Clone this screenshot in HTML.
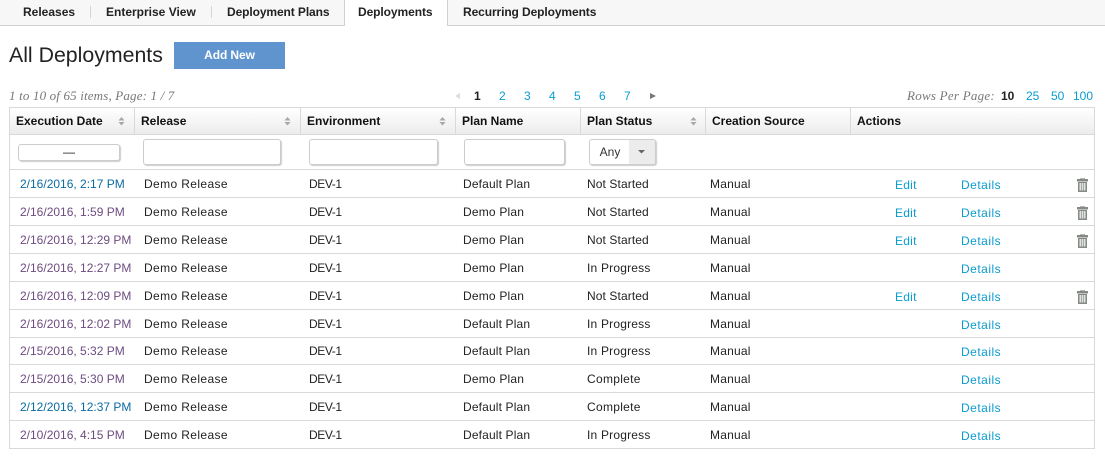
<!DOCTYPE html>
<html><head><meta charset="utf-8">
<style>
html,body{margin:0;padding:0;background:#fff;}
body{width:1105px;height:463px;position:relative;overflow:hidden;font-family:"Liberation Sans",Arial,sans-serif;font-size:12px;color:#222;}
.a{position:absolute;white-space:nowrap;line-height:14px;}
.b{font-weight:bold;}
.tab{top:5px;font-weight:bold;color:#222;}
.l{position:absolute;background:#d9d9d9;}
.r{letter-spacing:.38px;left:144px;}
.e{letter-spacing:-.4px;left:309px;}
.p{letter-spacing:.15px;left:463px;}
.q{letter-spacing:.2px;left:463px;}
.n{letter-spacing:.1px;left:587px;}
.i{letter-spacing:.2px;left:587px;}
.o{letter-spacing:.3px;left:587px;}
.m{letter-spacing:.2px;left:710px;}
.d{left:20px;color:#6d4c80;}
.d.v{color:#0b6ba0;}
.k{letter-spacing:.5px;color:#0a9bd0;left:961px;}
.t{letter-spacing:.25px;color:#0a9bd0;left:895px;}
.h{position:absolute;top:108px;height:26px;background:linear-gradient(#fff,#ececec);}
.th{top:114px;font-weight:bold;color:#111;}
.inp{position:absolute;box-sizing:border-box;border:1px solid #ccc;border-radius:3px;background:#fff;box-shadow:1px 1px 1px #ccc;}
.s{position:absolute;width:7px;height:10px;}
.pg{top:89px;letter-spacing:0;color:#0a9bd0;}
.x{position:absolute;left:1077px;}
</style></head><body>
<div style="position:absolute;left:0;top:0;width:1105px;height:25px;background:#f7f7f7;border-bottom:1px solid #d0d0d0;"></div>
<div style="position:absolute;left:344px;top:0;width:102px;height:26px;background:#fff;border-left:1px solid #d0d0d0;border-right:1px solid #d0d0d0;"></div>
<div class="a tab" style="left:23px;">Releases</div>
<div style="position:absolute;left:90px;top:6px;width:1px;height:12px;background:#d5d5d5;"></div>
<div class="a tab" style="left:106px;">Enterprise View</div>
<div style="position:absolute;left:211px;top:6px;width:1px;height:12px;background:#d5d5d5;"></div>
<div class="a tab" style="left:227px;letter-spacing:-.1px;">Deployment Plans</div>
<div class="a tab" style="left:358px;letter-spacing:-.08px;">Deployments</div>
<div class="a tab" style="left:463px;letter-spacing:-.1px;">Recurring Deployments</div>

<div class="a" style="left:9px;top:42px;font-size:21.3px;line-height:26px;color:#222;">All Deployments</div>
<div class="a b" style="left:174px;top:42px;width:111px;height:27px;line-height:27px;background:#5f94cf;color:#fff;text-align:center;letter-spacing:-.1px;">Add New</div>

<div class="a" style="left:9px;top:89px;font-family:'Liberation Serif',serif;font-style:italic;font-size:13px;color:#777;letter-spacing:.16px;">1 to 10 of 65 items, Page: 1 / 7</div>
<svg style="position:absolute;left:454px;top:92px" width="8" height="8"><path d="M6 1V7L1 4Z" fill="#ddd"/></svg>
<div class="a b pg" style="left:474px;color:#222;">1</div>
<div class="a pg" style="left:499px;">2</div>
<div class="a pg" style="left:524px;">3</div>
<div class="a pg" style="left:549px;">4</div>
<div class="a pg" style="left:574px;">5</div>
<div class="a pg" style="left:599px;">6</div>
<div class="a pg" style="left:624px;">7</div>
<svg style="position:absolute;left:649px;top:92px" width="8" height="8"><path d="M1 1V7L7 4Z" fill="#777"/></svg>
<div class="a" style="left:907px;top:89px;font-family:'Liberation Serif',serif;font-style:italic;font-size:13px;color:#777;letter-spacing:.25px;">Rows Per Page:</div>
<div class="a b pg" style="left:1001px;color:#222;">10</div>
<div class="a pg" style="left:1026px;">25</div>
<div class="a pg" style="left:1051px;">50</div>
<div class="a pg" style="left:1073px;">100</div>

<!-- table frame -->
<div class="l" style="left:9px;top:107px;width:1086px;height:1px;"></div>
<div class="l" style="left:9px;top:107px;width:1px;height:342px;"></div>
<div class="l" style="left:1094px;top:107px;width:1px;height:342px;"></div>
<div class="h" style="left:10px;width:1084px;"></div>
<div class="l" style="left:9px;top:134px;width:1086px;height:1px;"></div>
<div class="l" style="left:134px;top:108px;width:1px;height:26px;"></div>
<div class="l" style="left:300px;top:108px;width:1px;height:26px;"></div>
<div class="l" style="left:455px;top:108px;width:1px;height:26px;"></div>
<div class="l" style="left:580px;top:108px;width:1px;height:26px;"></div>
<div class="l" style="left:705px;top:108px;width:1px;height:26px;"></div>
<div class="l" style="left:850px;top:108px;width:1px;height:26px;"></div>

<div class="a th" style="left:16px;">Execution Date</div>
<div class="a th" style="left:141px;">Release</div>
<div class="a th" style="left:307px;">Environment</div>
<div class="a th" style="left:462px;">Plan Name</div>
<div class="a th" style="left:587px;">Plan Status</div>
<div class="a th" style="left:712px;">Creation Source</div>
<div class="a th" style="left:857px;">Actions</div>
<svg class="s" style="left:118px;top:117px"><path d="M3.500 0L6.500 3.500H.5ZM3.500 8.500L.5 5H6.500Z" fill="#a5a8a8"/></svg>
<svg class="s" style="left:284px;top:117px"><path d="M3.500 0L6.500 3.500H.5ZM3.500 8.500L.5 5H6.500Z" fill="#a5a8a8"/></svg>
<svg class="s" style="left:439px;top:117px"><path d="M3.500 0L6.500 3.500H.5ZM3.500 8.500L.5 5H6.500Z" fill="#a5a8a8"/></svg>
<svg class="s" style="left:690px;top:117px"><path d="M3.500 0L6.500 3.500H.5ZM3.500 8.500L.5 5H6.500Z" fill="#a5a8a8"/></svg>

<!-- filters -->
<div class="inp" style="left:18px;top:144px;width:102px;height:17px;text-align:center;line-height:14px;">—</div>
<div class="inp" style="left:143px;top:139px;width:138px;height:26px;"></div>
<div class="inp" style="left:309px;top:139px;width:129px;height:26px;"></div>
<div class="inp" style="left:464px;top:139px;width:101px;height:26px;"></div>
<div class="inp" style="left:589px;top:139px;width:67px;height:26px;overflow:hidden;">
  <div style="position:absolute;left:0;top:0;width:40px;height:24px;line-height:24px;text-align:center;color:#333;">Any</div>
  <div style="position:absolute;left:39px;top:0;width:27px;height:24px;background:#ececec;"></div>
  <svg style="position:absolute;left:48px;top:10px" width="10" height="6"><path d="M0 0H7L3.500 3.500Z" fill="#666"/></svg>
</div>

<!-- row lines -->
<div class="l" style="left:9px;top:169px;width:1086px;height:1px;"></div>
<div class="l" style="left:9px;top:197px;width:1086px;height:1px;"></div>
<div class="l" style="left:9px;top:225px;width:1086px;height:1px;"></div>
<div class="l" style="left:9px;top:253px;width:1086px;height:1px;"></div>
<div class="l" style="left:9px;top:281px;width:1086px;height:1px;"></div>
<div class="l" style="left:9px;top:309px;width:1086px;height:1px;"></div>
<div class="l" style="left:9px;top:337px;width:1086px;height:1px;"></div>
<div class="l" style="left:9px;top:364px;width:1086px;height:1px;"></div>
<div class="l" style="left:9px;top:392px;width:1086px;height:1px;"></div>
<div class="l" style="left:9px;top:420px;width:1086px;height:1px;"></div>
<div class="l" style="left:9px;top:448px;width:1086px;height:1px;"></div>

<!-- rows -->
<div class="a d v" style="top:177px;">2/16/2016, 2:17 PM</div><div class="a r" style="top:177px;">Demo Release</div><div class="a e" style="top:177px;">DEV-1</div><div class="a p" style="top:177px;">Default Plan</div><div class="a n" style="top:177px;">Not Started</div><div class="a m" style="top:177px;">Manual</div><div class="a t" style="top:178px;">Edit</div><div class="a k" style="top:178px;">Details</div>
<div class="a d" style="top:205px;">2/16/2016, 1:59 PM</div><div class="a r" style="top:205px;">Demo Release</div><div class="a e" style="top:205px;">DEV-1</div><div class="a q" style="top:205px;">Demo Plan</div><div class="a n" style="top:205px;">Not Started</div><div class="a m" style="top:205px;">Manual</div><div class="a t" style="top:206px;">Edit</div><div class="a k" style="top:206px;">Details</div>
<div class="a d" style="top:233px;">2/16/2016, 12:29 PM</div><div class="a r" style="top:233px;">Demo Release</div><div class="a e" style="top:233px;">DEV-1</div><div class="a q" style="top:233px;">Demo Plan</div><div class="a n" style="top:233px;">Not Started</div><div class="a m" style="top:233px;">Manual</div><div class="a t" style="top:234px;">Edit</div><div class="a k" style="top:234px;">Details</div>
<div class="a d" style="top:261px;">2/16/2016, 12:27 PM</div><div class="a r" style="top:261px;">Demo Release</div><div class="a e" style="top:261px;">DEV-1</div><div class="a q" style="top:261px;">Demo Plan</div><div class="a i" style="top:261px;">In Progress</div><div class="a m" style="top:261px;">Manual</div><div class="a k" style="top:262px;">Details</div>
<div class="a d" style="top:289px;">2/16/2016, 12:09 PM</div><div class="a r" style="top:289px;">Demo Release</div><div class="a e" style="top:289px;">DEV-1</div><div class="a q" style="top:289px;">Demo Plan</div><div class="a n" style="top:289px;">Not Started</div><div class="a m" style="top:289px;">Manual</div><div class="a t" style="top:290px;">Edit</div><div class="a k" style="top:290px;">Details</div>
<div class="a d" style="top:317px;">2/16/2016, 12:02 PM</div><div class="a r" style="top:317px;">Demo Release</div><div class="a e" style="top:317px;">DEV-1</div><div class="a p" style="top:317px;">Default Plan</div><div class="a i" style="top:317px;">In Progress</div><div class="a m" style="top:317px;">Manual</div><div class="a k" style="top:318px;">Details</div>
<div class="a d" style="top:344px;">2/15/2016, 5:32 PM</div><div class="a r" style="top:344px;">Demo Release</div><div class="a e" style="top:344px;">DEV-1</div><div class="a p" style="top:344px;">Default Plan</div><div class="a i" style="top:344px;">In Progress</div><div class="a m" style="top:344px;">Manual</div><div class="a k" style="top:345px;">Details</div>
<div class="a d" style="top:372px;">2/15/2016, 5:30 PM</div><div class="a r" style="top:372px;">Demo Release</div><div class="a e" style="top:372px;">DEV-1</div><div class="a q" style="top:372px;">Demo Plan</div><div class="a o" style="top:372px;">Complete</div><div class="a m" style="top:372px;">Manual</div><div class="a k" style="top:373px;">Details</div>
<div class="a d v" style="top:400px;">2/12/2016, 12:37 PM</div><div class="a r" style="top:400px;">Demo Release</div><div class="a e" style="top:400px;">DEV-1</div><div class="a p" style="top:400px;">Default Plan</div><div class="a o" style="top:400px;">Complete</div><div class="a m" style="top:400px;">Manual</div><div class="a k" style="top:401px;">Details</div>
<div class="a d" style="top:428px;">2/10/2016, 4:15 PM</div><div class="a r" style="top:428px;">Demo Release</div><div class="a e" style="top:428px;">DEV-1</div><div class="a p" style="top:428px;">Default Plan</div><div class="a i" style="top:428px;">In Progress</div><div class="a m" style="top:428px;">Manual</div><div class="a k" style="top:429px;">Details</div>

<!-- trash icons -->
<svg class="x" style="top:178px" width="11" height="14"><path d="M3 0H8V1H3Z" fill="#b5b8b5"/><path d="M0 1H11V3.500H0ZM1 4H10V14H1Z" fill="#858a86"/><path d="M2.500 5H8.500V12.500H2.500Z" fill="#dfe2df"/><path d="M4 5H5V12.500H4ZM6 5H7V12.500H6Z" fill="#a8aca8"/></svg>
<svg class="x" style="top:206px" width="11" height="14"><path d="M3 0H8V1H3Z" fill="#b5b8b5"/><path d="M0 1H11V3.500H0ZM1 4H10V14H1Z" fill="#858a86"/><path d="M2.500 5H8.500V12.500H2.500Z" fill="#dfe2df"/><path d="M4 5H5V12.500H4ZM6 5H7V12.500H6Z" fill="#a8aca8"/></svg>
<svg class="x" style="top:234px" width="11" height="14"><path d="M3 0H8V1H3Z" fill="#b5b8b5"/><path d="M0 1H11V3.500H0ZM1 4H10V14H1Z" fill="#858a86"/><path d="M2.500 5H8.500V12.500H2.500Z" fill="#dfe2df"/><path d="M4 5H5V12.500H4ZM6 5H7V12.500H6Z" fill="#a8aca8"/></svg>
<svg class="x" style="top:290px" width="11" height="14"><path d="M3 0H8V1H3Z" fill="#b5b8b5"/><path d="M0 1H11V3.500H0ZM1 4H10V14H1Z" fill="#858a86"/><path d="M2.500 5H8.500V12.500H2.500Z" fill="#dfe2df"/><path d="M4 5H5V12.500H4ZM6 5H7V12.500H6Z" fill="#a8aca8"/></svg>
</body></html>
